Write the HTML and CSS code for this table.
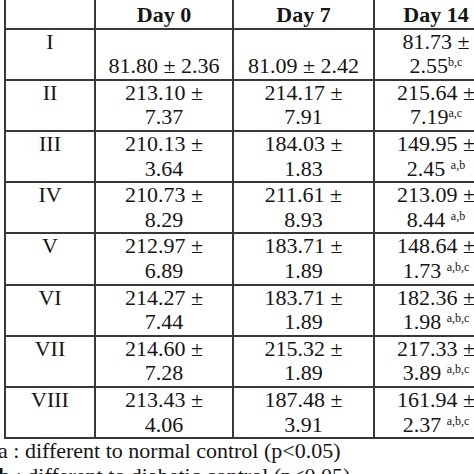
FILE: index.html
```html
<!DOCTYPE html>
<html lang="en">
<head>
  <meta charset="UTF-8" />
  <meta name="viewport" content="width=device-width, initial-scale=1.0"/>
  <title>Blood glucose levels</title>
  <link rel="stylesheet" href="styles.css">
</head>
<body>
  <div class="sheet">
    <table class="results">
      <colgroup>
        <col class="col-group">
        <col class="col-day0">
        <col class="col-day7">
        <col class="col-day14">
      </colgroup>
      <thead>
        <tr><th></th><th>Day 0</th><th>Day 7</th><th>Day 14</th></tr>
      </thead>
      <tbody>
        <tr>
          <td>I</td>
          <td class="low">81.80 ± 2.36</td>
          <td class="low">81.09 ± 2.42</td>
          <td>81.73 ±<br>2.55<sup>b,c</sup></td>
        </tr>
        <tr>
          <td>II</td>
          <td>213.10 ±<br>7.37</td>
          <td>214.17 ±<br>7.91</td>
          <td>215.64 ±<br>7.19<sup>a,c</sup></td>
        </tr>
        <tr>
          <td>III</td>
          <td>210.13 ±<br>3.64</td>
          <td>184.03 ±<br>1.83</td>
          <td>149.95 ±<br>2.45 <sup>a,b</sup></td>
        </tr>
        <tr>
          <td>IV</td>
          <td>210.73 ±<br>8.29</td>
          <td>211.61 ±<br>8.93</td>
          <td>213.09 ±<br>8.44 <sup>a,b</sup></td>
        </tr>
        <tr>
          <td>V</td>
          <td>212.97 ±<br>6.89</td>
          <td>183.71 ±<br>1.89</td>
          <td>148.64 ±<br>1.73 <sup>a,b,c</sup></td>
        </tr>
        <tr>
          <td>VI</td>
          <td>214.27 ±<br>7.44</td>
          <td>183.71 ±<br>1.89</td>
          <td>182.36 ±<br>1.98 <sup>a,b,c</sup></td>
        </tr>
        <tr>
          <td>VII</td>
          <td>214.60 ±<br>7.28</td>
          <td>215.32 ±<br>1.89</td>
          <td>217.33 ±<br>3.89 <sup>a,b,c</sup></td>
        </tr>
        <tr>
          <td>VIII</td>
          <td>213.43 ±<br>4.06</td>
          <td>187.48 ±<br>3.91</td>
          <td>161.94 ±<br>2.37 <sup>a,b,c</sup></td>
        </tr>
      </tbody>
    </table>

    <p class="notes">
      a : different to normal control (p&lt;0.05)<br>
      <b>b</b> : different to diabetic control (p&lt;0.05)
    </p>
  </div>
</body>
</html>
```

FILE: styles.css
```css
html, body {
  margin: 0;
  padding: 0;
  overflow: hidden;
  background: #fff;
}

body {
  font-family: "Liberation Serif", "Times New Roman", serif;
  font-size: 22px;
  line-height: 24.6px;
  color: #151515;
}

.sheet {
  padding-left: 4px;
}

.results {
  border-collapse: collapse;
  table-layout: fixed;
  width: 493px;
  margin-top: -10px;
}

.col-group { width: 90px; }
.col-day0  { width: 138px; }
.col-day7  { width: 141px; }
.col-day14 { width: 124px; }

th, td {
  border: 2px solid #383838;
  padding: 0;
  text-align: center;
  vertical-align: top;
  white-space: nowrap;
}

th {
  font-weight: bold;
  padding-top: 11px;
}

td.low {
  vertical-align: bottom;
}

sup {
  font-size: 12px;
  line-height: 0;
  vertical-align: 7px;
}

.notes {
  margin: 0 0 0 -6px;
  white-space: nowrap;
}
```
